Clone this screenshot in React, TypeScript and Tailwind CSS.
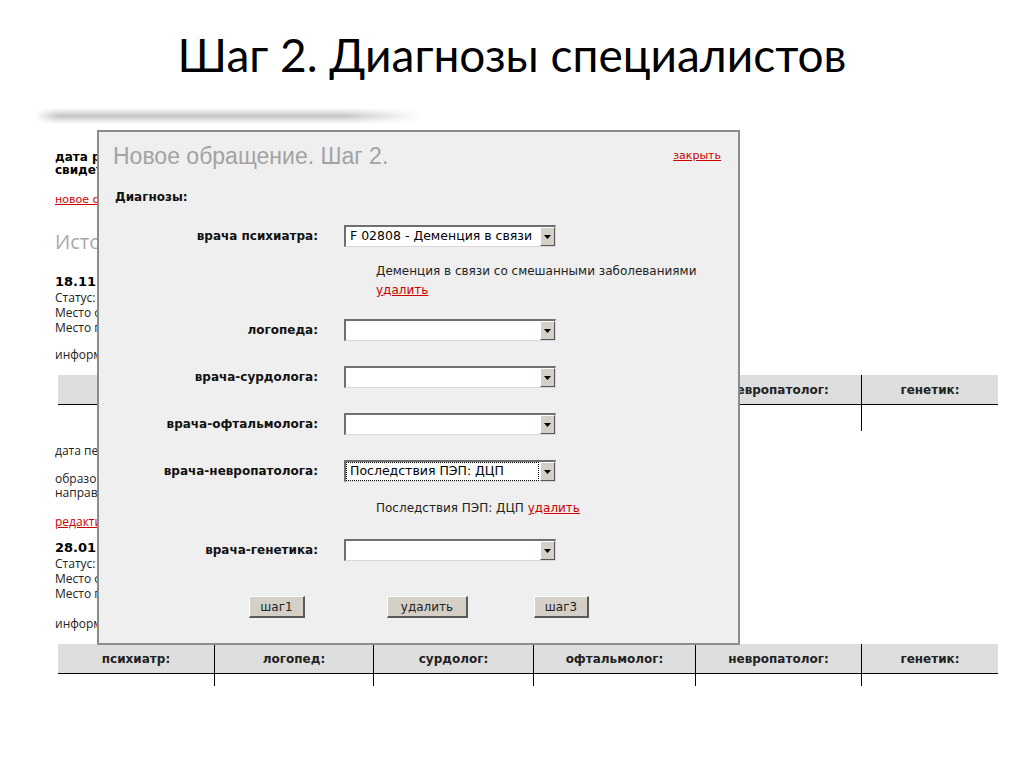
import React from 'react'

// Step 2 slide: page screenshot with the "new request" dialog on top

const HEADERS = ['психиатр:', 'логопед:', 'сурдолог:', 'офтальмолог:', 'невропатолог:', 'генетик:']
const COLS = 'grid-cols-[156px_159px_160px_162px_166px_137px]'

function Select({ value, focused }: { value?: string; focused?: boolean }) {
  return (
    <div className="flex h-[22px] w-[212px] bg-white border-t-2 border-l-2 border-b border-r border-t-[#6f6f6f] border-l-[#6f6f6f] border-b-[#d8d8d8] border-r-[#d8d8d8]">
      <div className="flex flex-1 items-center pl-[1px] pr-[2px] py-[1px]">
        <span
          className={
            'flex h-full w-full items-center pl-[3px] text-[12.5px] leading-none text-black whitespace-nowrap overflow-hidden ' +
            (focused ? 'outline outline-1 outline-dotted outline-black' : '')
          }
        >
          {value}
        </span>
      </div>
      <div className="flex h-full w-[15px] items-center justify-center bg-[#d4d0c8] border-t border-l border-t-white border-l-white border-b border-r border-b-[#555] border-r-[#555]">
        <svg width="7" height="4" viewBox="0 0 7 4">
          <path d="M0 0h7L3.5 4z" fill="#000" />
        </svg>
      </div>
    </div>
  )
}

function Row({ label, value, focused, className }: { label: string; value?: string; focused?: boolean; className: string }) {
  return (
    <div className={'flex items-center ' + className}>
      <div className="w-[219px] text-right text-[12px] font-bold text-[#111]">{label}</div>
      <div className="ml-[26px]">
        <Select value={value} focused={focused} />
      </div>
    </div>
  )
}

function Button({ children, className }: { children: React.ReactNode; className: string }) {
  return (
    <div
      className={
        'flex h-[22px] items-center justify-center bg-[#d4d0c8] text-[12px] text-[#222] border-t border-l border-t-white border-l-white border-b-2 border-r-2 border-b-[#5a5a5a] border-r-[#5a5a5a] ' +
        className
      }
    >
      {children}
    </div>
  )
}

function Table({ bodyHeight, className }: { bodyHeight: string; className: string }) {
  return (
    <div className={'ml-[28px] w-[940px] ' + className}>
      <div className={'grid h-[30px] bg-[#dedede] border-b border-black ' + COLS}>
        {HEADERS.map((h, i) => (
          <div
            key={h}
            className={
              'flex items-center justify-center text-[12px] font-bold text-[#222] ' + (i > 0 ? 'border-l border-black' : '')
            }
          >
            {h}
          </div>
        ))}
      </div>
      <div className={'grid ' + COLS + ' ' + bodyHeight}>
        {HEADERS.map((h, i) => (
          <div key={h} className={i > 0 ? 'border-l border-black' : ''} />
        ))}
      </div>
    </div>
  )
}

export default function App() {
  return (
    <div className="relative h-[768px] w-[1024px] overflow-hidden bg-white">
      {/* Slide title */}
      <h1 className="h-[105px] pt-[25px] text-center font-['Lato',sans-serif] text-[46px] leading-[60px] text-black">
        Шаг 2. Диагнозы специалистов
      </h1>

      {/* Page screenshot */}
      <div className="relative ml-[30px] w-[970px] font-['DejaVu_Sans',sans-serif]">
        <div className="ml-[5px] mt-[3px] h-[16px] w-[385px] bg-[linear-gradient(to_bottom,#fff_0%,#c4c4c4_50%,#fff_100%)] [mask-image:linear-gradient(to_right,transparent,#000_6%,#000_80%,transparent)]" />

        {/* left column, partly hidden by the dialog */}
        <div className="ml-[25px] w-[42px] overflow-hidden whitespace-nowrap text-[#222]">
          <div className="mt-[27px] text-[12px] font-bold leading-[13px] text-black">
            <div>дата регистрации:</div>
            <div>свидетельство:</div>
          </div>
          <div className="mt-[16px] text-[11px] leading-[14px] text-[#c00] underline">новое обращение</div>
          <div className="mt-[23px] font-['Open_Sans',sans-serif] text-[20px] leading-[24px] text-[#aaa]">История обращений</div>
          <div className="mt-[20px] text-[13px] font-bold leading-[16px] text-black">18.11.2008</div>
          <div className="font-['Open_Sans',sans-serif] text-[12px] leading-[15px]">
            <div>Статус: открыто</div>
            <div>Место обращения:</div>
            <div>Место проживания:</div>
          </div>
          <div className="mt-[13px] font-['Open_Sans',sans-serif] text-[12px] leading-[14px]">информация</div>
        </div>

        <Table className="mt-[13px]" bodyHeight="h-[26px]" />

        <div className="ml-[25px] w-[42px] overflow-hidden whitespace-nowrap font-['Open_Sans',sans-serif] text-[12px] leading-[14px] text-[#222]">
          <div className="mt-[13px]">дата первичного обращения:</div>
          <div className="mt-[14px]">
            <div>образование:</div>
            <div>направлен:</div>
          </div>
          <div className="mt-[15px] text-[#c00] underline">редактировать</div>
          <div className="mt-[11px] font-['DejaVu_Sans',sans-serif] text-[13px] font-bold leading-[16px] text-black">28.01.2009</div>
          <div className="leading-[15px]">
            <div>Статус: открыто</div>
            <div>Место обращения:</div>
            <div>Место проживания:</div>
          </div>
          <div className="mt-[16px]">информация</div>
        </div>

        <Table className="mt-[13px]" bodyHeight="h-[12px]" />
      </div>

      {/* Dialog */}
      <div className="absolute left-[97px] top-[130px] flex h-[515px] w-[643px] flex-col border-2 border-[#8c8c8c] bg-[#efefef] font-['DejaVu_Sans',sans-serif]">
        <div className="flex items-start justify-between pl-[14px] pr-[17px] pt-[12px]">
          <div className="font-['Liberation_Sans',sans-serif] text-[23px] leading-[24px] text-[#a3a3a3]">Новое обращение. Шаг 2.</div>
          <div className="pt-[4px] text-[11px] text-[#c00] underline">закрыть</div>
        </div>

        <div className="ml-[16px] mt-[22px] text-[12px] font-bold leading-[14px] text-[#111]">Диагнозы:</div>

        <Row className="mt-[21px]" label="врача психиатра:" value="F 02808 - Деменция в связи" />
        <div className="ml-[277px] mt-[15px] text-[12px] leading-[19px] text-[#222]">
          <div>Деменция в связи со смешанными заболеваниями</div>
          <div className="text-[#c00] underline">удалить</div>
        </div>

        <Row className="mt-[19px]" label="логопеда:" />
        <Row className="mt-[25px]" label="врача-сурдолога:" />
        <Row className="mt-[25px]" label="врача-офтальмолога:" />
        <Row className="mt-[25px]" label="врача-невропатолога:" value="Последствия ПЭП: ДЦП" focused />
        <div className="ml-[277px] mt-[18px] text-[12px] leading-[16px] text-[#222]">
          Последствия ПЭП: ДЦП <span className="text-[#c00] underline">удалить</span>
        </div>
        <Row className="mt-[23px]" label="врача-генетика:" />

        <div className="mt-[35px] flex">
          <Button className="ml-[150px] w-[56px]">шаг1</Button>
          <Button className="ml-[82px] w-[81px]">удалить</Button>
          <Button className="ml-[66px] w-[55px]">шаг3</Button>
        </div>
      </div>
    </div>
  )
}
